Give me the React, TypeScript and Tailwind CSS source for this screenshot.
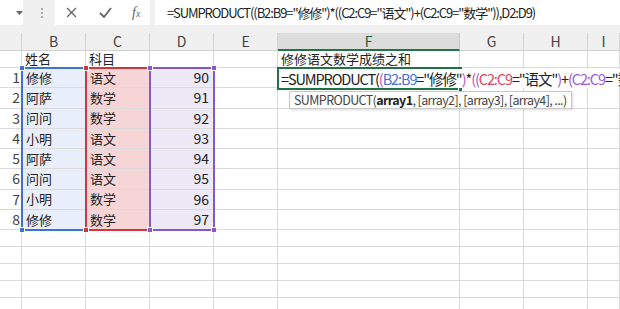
import React from "react";

const widths = [22, 64, 64, 64, 64, 182, 64, 64, 32];
const letters = ["", "B", "C", "D", "E", "F", "G", "H", "I"];

const names = ["修修", "阿萨", "问问", "小明", "阿萨", "问问", "小明", "修修"];
const subjects = ["语文", "数学", "数学", "语文", "语文", "语文", "数学", "数学"];
const scores = [90, 91, 92, 93, 94, 95, 96, 97];

const Cell = ({ w, className = "", children }: { w: number; className?: string; children?: React.ReactNode }) => (
  <div
    className={"shrink-0 h-full border-r border-b border-[#dadada] flex items-center overflow-visible whitespace-nowrap " + className}
    style={{ width: w }}
  >
    {children}
  </div>
);

const Handle = ({ x, y, color }: { x: number; y: number; color: string }) => (
  <div
    className="absolute w-[6px] h-[6px] border border-white"
    style={{ left: x - 3, top: y - 3, backgroundColor: color }}
  />
);

export default function App() {
  return (
    <div className="relative w-[620px] h-[309px] overflow-hidden bg-white text-[#222] font-['Noto_Sans_CJK_SC',sans-serif]">
      {/* formula bar */}
      <div className="h-[33px] bg-[#f0f0f0] flex items-start">
        <div className="w-[23px] h-[25px] bg-white relative">
          <svg className="absolute left-[16px] top-[11px]" width="7" height="4" viewBox="0 0 7 4">
            <path d="M0 0 L7 0 L3.5 4 Z" fill="#666" />
          </svg>
        </div>
        <div className="w-[32px] h-[25px] flex flex-col items-center justify-center gap-[2px] pl-[6px]">
          <div className="w-[2px] h-[2px] bg-[#aaa]" />
          <div className="w-[2px] h-[2px] bg-[#aaa]" />
          <div className="w-[2px] h-[2px] bg-[#aaa]" />
        </div>
        <div className="w-[95px] h-[25px] bg-white flex items-center">
          <svg className="ml-[11px]" width="11" height="11" viewBox="0 0 11 11">
            <path d="M1 1 L10 10 M10 1 L1 10" stroke="#666" strokeWidth="1.3" />
          </svg>
          <svg className="ml-[22px]" width="13" height="11" viewBox="0 0 13 11">
            <path d="M1 6 L5 10 L12 1" stroke="#666" strokeWidth="1.8" fill="none" />
          </svg>
          <span className="ml-[20px] font-['Liberation_Serif',serif] italic text-[14px] text-[#666] leading-none">
            f<span className="text-[10px]">x</span>
          </span>
        </div>
        <div className="ml-[5px] flex-1 h-[25px] bg-white flex items-center pl-[12px] text-[13px] tracking-[-1.1px] whitespace-nowrap overflow-hidden">
          =SUMPRODUCT((B2:B9="修修")*((C2:C9="语文")+(C2:C9="数学")),D2:D9)
        </div>
      </div>

      {/* column headers */}
      <div className="h-[18px] flex bg-[#f0f0f0]">
        {widths.map((w, i) => (
          <div
            key={i}
            className={
              "shrink-0 h-full flex items-center justify-center text-[14px] border-r " +
              (i === 5
                ? "bg-[#dcdcdc] border-b-2 border-b-[#217346] border-r-[#c8c8c8] text-[#1b5e37]"
                : "border-b border-b-[#cfcfcf] border-r-[#d4d4d4] text-[#444]")
            }
            style={{ width: w }}
          >
            {letters[i]}
          </div>
        ))}
      </div>

      {/* title row */}
      <div className="h-[17px] flex text-[13px]">
        <Cell w={22} />
        <Cell w={64} className="pl-[3px]">姓名</Cell>
        <Cell w={64} className="pl-[3px]">科目</Cell>
        <Cell w={64} />
        <Cell w={64} />
        <Cell w={182} className="pl-[3px]">修修语文数学成绩之和</Cell>
        <Cell w={64} />
        <Cell w={64} />
        <Cell w={32} />
      </div>

      {/* data rows */}
      {names.map((n, r) => (
        <div key={r} className="h-[20.25px] flex text-[13px]">
          <Cell w={22} className="justify-end pr-[1px] text-[14px] text-[#444]">{r + 1}</Cell>
          <Cell w={64} className="pl-[4px] bg-[#e8effa]">{n}</Cell>
          <Cell w={64} className="pl-[4px] bg-[#f6d5d6]">{subjects[r]}</Cell>
          <Cell w={64} className="justify-end pr-[4px] text-[14px] bg-[#eee9f6]">{scores[r]}</Cell>
          <Cell w={64} />
          <Cell w={182} />
          <Cell w={64} />
          <Cell w={64} />
          <Cell w={32} />
        </div>
      ))}

      {/* empty rows */}
      {[0, 1, 2, 3, 4].map((r) => (
        <div key={r} className="h-[17px] flex">
          {widths.map((w, i) => (
            <Cell key={i} w={w} />
          ))}
        </div>
      ))}

      {/* range highlights */}
      <div className="absolute left-[21px] top-[67px] w-[66px] h-[164px] border-2 border-[#3a73d4]" />
      <div className="absolute left-[85px] top-[67px] w-[66px] h-[164px] border-2 border-[#d0363d]" />
      <div className="absolute left-[149px] top-[67px] w-[66px] h-[164px] border-2 border-[#8757c7]" />
      <Handle x={22} y={68} color="#3a73d4" />
      <Handle x={22} y={230} color="#3a73d4" />
      <Handle x={86} y={68} color="#d0363d" />
      <Handle x={86} y={230} color="#d0363d" />
      <Handle x={150} y={68} color="#8757c7" />
      <Handle x={150} y={230} color="#8757c7" />
      <Handle x={214} y={68} color="#8757c7" />
      <Handle x={214} y={230} color="#8757c7" />

      {/* active edit cell */}
      <div className="absolute left-[277px] top-[67px] w-[185px] h-[23px] border-2 border-[#217346]" />
      <div className="absolute left-[279px] top-[69px] right-0 h-[19px] bg-white flex items-center pl-[2px] text-[14.5px] whitespace-nowrap tracking-[-1.1px]">
        <span>=SUMPRODUCT(</span>
        <span className="text-[#c24fa8]">(</span>
        <span className="text-[#4a6fd6]">B2:B9</span>
        <span>="修修"</span>
        <span className="text-[#c24fa8]">)</span>
        <span>*</span>
        <span className="text-[#c24fa8]">(</span>
        <span className="text-[#9a5bd6]">(</span>
        <span className="text-[#e0455e]">C2:C9</span>
        <span>="语文"</span>
        <span className="text-[#9a5bd6]">)</span>
        <span>+</span>
        <span className="text-[#9a5bd6]">(</span>
        <span className="text-[#9a5bd6]">C2:C9</span>
        <span>="数学"</span>
      </div>
      <div className="absolute left-[458px] top-[87px] w-[5px] h-[5px] bg-[#217346] border border-white" />

      {/* function tooltip */}
      <div className="absolute left-[289px] top-[91px] h-[18px] bg-white border border-[#c8c8c8] shadow-[1px_1px_2px_rgba(0,0,0,0.15)] flex items-center px-[4px] text-[12.5px] tracking-[-0.6px] text-[#444] whitespace-nowrap">
        SUMPRODUCT(<b className="text-[#222]">array1</b>, [array2], [array3], [array4], ...)
      </div>
    </div>
  );
}
